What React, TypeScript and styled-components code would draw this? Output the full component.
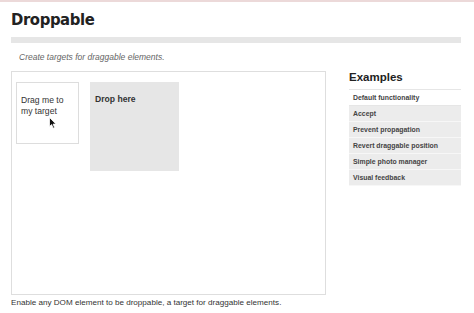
import React from "react";
import styled, { createGlobalStyle } from "styled-components";

const Global = createGlobalStyle`
  html, body { margin: 0; padding: 0; background: #fff; }
  body { font-family: "Liberation Sans", Arial, sans-serif; color: #333; }
`;

const Page = styled.div`
  border-top: 2px solid #ecd9d9;
  padding: 0 13px 0 11px;
  width: 474px;
  height: 311px;
  box-sizing: border-box;
  overflow: hidden;
`;

const Title = styled.h1`
  margin: 8px 0 0;
  font-family: "DejaVu Sans Condensed", "Liberation Sans", sans-serif;
  font-weight: bold;
  font-size: 16.5px;
  line-height: 20px;
  color: #222;
  letter-spacing: -0.4px;
`;

const Bar = styled.div`
  margin-top: 7px;
  height: 6px;
  background: #e6e6e6;
`;

const Row = styled.div`
  display: flex;
  gap: 23px;
`;

const Main = styled.div`
  width: 315px;
  display: flex;
  flex-direction: column;
`;

const Description = styled.p`
  margin: 7px 0 0;
  padding-left: 8px;
  font-style: italic;
  font-size: 8.5px;
  line-height: 14px;
  color: #666;
`;

const Demo = styled.div`
  position: relative;
  margin-top: 7px;
  height: 224px;
  box-sizing: border-box;
  border: 1px solid #dedede;
  padding: 10px 4px;
  display: flex;
  align-items: flex-start;
  gap: 11px;
`;

const Draggable = styled.div`
  width: 63px;
  height: 62px;
  box-sizing: border-box;
  border: 1px solid #ddd;
  background: #fff;
  padding: 12px 4px 0;
  font-size: 8.6px;
  line-height: 10.5px;
  color: #333;
`;

const Droppable = styled.div`
  width: 89px;
  height: 89px;
  box-sizing: border-box;
  background: #e6e6e6;
  padding: 12px 5px 0;
  font-size: 8.6px;
  font-weight: bold;
  line-height: 10.5px;
  color: #333;
`;

const Cursor = styled.svg`
  position: absolute;
  left: 37px;
  top: 45px;
`;

const Footer = styled.p`
  margin: 1px 0 0;
  font-size: 8.1px;
  line-height: 14px;
  color: #333;
`;

const Sidebar = styled.aside`
  width: 112px;
  display: flex;
  flex-direction: column;
`;

const SideHeading = styled.h2`
  margin: 26px 0 4px;
  font-size: 11.5px;
  line-height: 16px;
  font-weight: bold;
  color: #222;
`;

const List = styled.ul`
  margin: 0;
  padding: 0;
  list-style: none;
  border-top: 1px solid #e6e6e6;
`;

const Item = styled.li<{ $active?: boolean }>`
  height: 15px;
  border-bottom: 1px solid ${(p) => (p.$active ? "#e6e6e6" : "#f7f7f7")};
  background: ${(p) => (p.$active ? "#fff" : "#ececec")};
  padding-left: 4px;
  font-size: 6.9px;
  font-weight: bold;
  line-height: 15px;
  color: #444;
`;

const examples = [
  "Default functionality",
  "Accept",
  "Prevent propagation",
  "Revert draggable position",
  "Simple photo manager",
  "Visual feedback",
];

export default function App() {
  return (
    <>
      <Global />
      <Page>
        <Title>Droppable</Title>
        <Bar />
        <Row>
          <Main>
            <Description>Create targets for draggable elements.</Description>
            <Demo>
              <Draggable>Drag me to my target</Draggable>
              <Droppable>Drop here</Droppable>
              <Cursor width="8" height="12" viewBox="0 0 8 12">
                <path d="M0.5 0.5 L0.5 9.5 L2.6 7.6 L4.2 11.2 L5.6 10.6 L4.1 7.1 L7 7.1 Z" fill="#111" stroke="#fff" strokeWidth="0.8" />
              </Cursor>
            </Demo>
            <Footer>Enable any DOM element to be droppable, a target for draggable elements.</Footer>
          </Main>
          <Sidebar>
            <SideHeading>Examples</SideHeading>
            <List>
              {examples.map((e, i) => (
                <Item key={e} $active={i === 0}>{e}</Item>
              ))}
            </List>
          </Sidebar>
        </Row>
      </Page>
    </>
  );
}
